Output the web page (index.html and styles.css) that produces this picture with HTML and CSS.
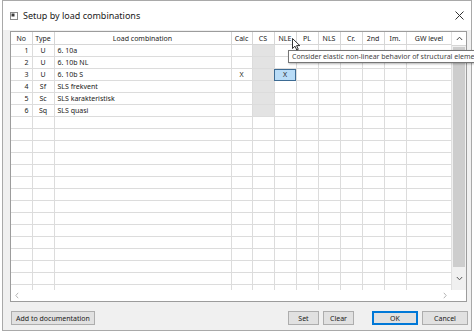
FILE: index.html
```html
<!DOCTYPE html>
<html lang="en">
<head>
    <meta charset="UTF-8">
    <title>Setup by load combinations</title>
    <link rel="stylesheet" href="styles.css">
</head>
<body>
    <div class="dialog">
        <div class="titlebar">
            <svg class="app-icon" width="8" height="8" viewBox="0 0 8 8">
                <rect x="0.5" y="0.5" width="7" height="7" fill="#fff" stroke="#8a8a8a"/>
                <rect x="1.5" y="1.5" width="3" height="3" fill="#3a3a3a"/>
            </svg>
            <span class="title">Setup by load combinations</span>
            <svg class="close" width="9" height="9" viewBox="0 0 9 9">
                <path d="M0.5 0.5 L8.5 8.5 M8.5 0.5 L0.5 8.5" stroke="#333" stroke-width="1"/>
            </svg>
        </div>

        <div class="content">
            <div class="grid-wrap">
                <div class="grid-main">
                    <div class="grid-area">
                        <table class="grid">
                            <colgroup>
                                <col style="width:21px"><col style="width:22px"><col style="width:177px">
                                <col style="width:21px"><col style="width:22px"><col style="width:22px">
                                <col style="width:22px"><col style="width:22px"><col style="width:22px">
                                <col style="width:22px"><col style="width:22px"><col style="width:46px">
                            </colgroup>
                            <thead>
                                <tr>
                                    <th>No</th><th>Type</th><th>Load combination</th><th>Calc</th><th>CS</th>
                                    <th>NLE</th><th>PL</th><th>NLS</th><th>Cr.</th><th>2nd</th><th>Im.</th><th>GW level</th>
                                </tr>
                            </thead>
                            <tbody id="rows"></tbody>
                        </table>
                    </div>
                    <div class="vscroll">
                        <div class="vscroll-head">
                            <svg width="7" height="5" viewBox="0 0 7 5"><path d="M0.8 4 L3.5 1.2 L6.2 4" fill="none" stroke="#444" stroke-width="1"/></svg>
                        </div>
                        <div class="vscroll-track">
                            <div class="vscroll-thumb"></div>
                            <div class="vscroll-arrow">
                                <svg width="7" height="5" viewBox="0 0 7 5"><path d="M0.8 1 L3.5 3.8 L6.2 1" fill="none" stroke="#555" stroke-width="1"/></svg>
                            </div>
                        </div>
                    </div>
                </div>
                <div class="hscroll">
                    <svg width="4" height="7" viewBox="0 0 4 7"><path d="M3.2 0.8 L0.8 3.5 L3.2 6.2" fill="none" stroke="#b5b5b5" stroke-width="1"/></svg>
                    <svg width="4" height="7" viewBox="0 0 4 7"><path d="M0.8 0.8 L3.2 3.5 L0.8 6.2" fill="none" stroke="#b5b5b5" stroke-width="1"/></svg>
                </div>
            </div>

            <div class="buttons">
                <button class="btn btn-doc">Add to documentation</button>
                <div class="spacer"></div>
                <button class="btn btn-small">Set</button>
                <button class="btn btn-small">Clear</button>
                <button class="btn btn-wide btn-default">OK</button>
                <button class="btn btn-wide">Cancel</button>
            </div>
        </div>
    </div>

    <div class="tooltip">Consider elastic non-linear behavior of structural elements</div>
    <svg class="cursor" width="9" height="13" viewBox="0 0 9 13">
        <path d="M0.5 0.5 L0.5 10.5 L3 8.2 L4.8 12 L6.3 11.3 L4.6 7.6 L7.8 7.6 Z" fill="#fff" stroke="#000" stroke-width="0.8"/>
    </svg>

    <script>
    document.addEventListener("DOMContentLoaded", function() {
        const data = [
            ["1", "U", "6. 10a", "", false],
            ["2", "U", "6. 10b NL", "", false],
            ["3", "U", "6. 10b S", "X", true],
            ["4", "Sf", "SLS frekvent", "", false],
            ["5", "Sc", "SLS karakteristisk", "", false],
            ["6", "Sq", "SLS quasi", "", false]
        ];
        const body = document.getElementById("rows");
        let html = "";
        for (let i = 0; i < 21; i++) {
            const r = data[i];
            if (r) {
                html += '<tr><td class="num">' + r[0] + '</td><td class="center">' + r[1] + '</td><td>' + r[2] + '</td>'
                    + '<td class="center">' + r[3] + '</td><td class="cs"></td>'
                    + (r[4] ? '<td class="center selected">X</td>' : '<td></td>')
                    + '<td></td><td></td><td></td><td></td><td></td><td></td></tr>';
            } else {
                html += '<tr>' + '<td></td>'.repeat(12) + '</tr>';
            }
        }
        body.innerHTML = html;
    });
    </script>
</body>
</html>
```

FILE: styles.css
```css
body {
    position: relative;
    margin: 0;
    background-color: #fff;
    font-family: "Noto Sans", "Open Sans", sans-serif;
    color: #1a1a1a;
    overflow: hidden;
}

.dialog {
    width: 468px;
    height: 329px;
    margin-left: 2px;
    border: 1px solid #a9a9a9;
    background-color: #f0f0f0;
    display: flex;
    flex-direction: column;
    overflow: hidden;
}

.titlebar {
    height: 29px;
    background-color: #fff;
    display: flex;
    align-items: center;
    padding: 0 6px 0 7px;
    flex-shrink: 0;
}

.app-icon {
    margin-right: 5px;
}

.title {
    font-size: 9px;
    flex: 1;
}

.close {
    margin-right: 1px;
}

.content {
    padding: 1px 3px 0 7px;
    display: flex;
    flex-direction: column;
}

.grid-wrap {
    width: 455px;
    height: 269px;
    border: 1px solid #9c9c9c;
    background-color: #fff;
    display: flex;
    flex-direction: column;
}

.grid-main {
    flex: 1;
    display: flex;
    overflow: hidden;
}

.grid-area {
    width: 441px;
    overflow: hidden;
}

.grid {
    table-layout: fixed;
    border-collapse: collapse;
    width: 441px;
    font-size: 7px;
}

.grid th {
    height: 12px;
    font-weight: normal;
    border-right: 1px solid #d6d6d6;
    border-bottom: 1px solid #d6d6d6;
    padding: 0;
    text-align: center;
    white-space: nowrap;
}

.grid td {
    height: 11px;
    padding: 0 3px;
    border-right: 1px solid #dcdcdc;
    border-bottom: 1px solid #dcdcdc;
    white-space: nowrap;
    overflow: hidden;
}

.grid td.num {
    text-align: right;
}

.grid td.center {
    text-align: center;
}

.grid td.cs {
    background-color: #e3e3e3;
}

.grid td.selected {
    background-color: #b9dcf7;
    outline: 1px solid #3d6b93;
    outline-offset: -1px;
}

.vscroll {
    width: 14px;
    display: flex;
    flex-direction: column;
    border-left: 1px solid #e0e0e0;
}

.vscroll-head {
    height: 13px;
    display: flex;
    align-items: center;
    justify-content: center;
    border-bottom: 1px solid #d6d6d6;
    flex-shrink: 0;
}

.vscroll-track {
    flex: 1;
    background-color: #f0f0f0;
    display: flex;
    flex-direction: column;
    padding-top: 1px;
}

.vscroll-thumb {
    height: 220px;
    margin: 0 1px;
    background-color: #cdcdcd;
    flex-shrink: 0;
}

.vscroll-arrow {
    flex: 1;
    display: flex;
    align-items: center;
    justify-content: center;
}

.hscroll {
    height: 11px;
    display: flex;
    justify-content: space-between;
    align-items: center;
    padding: 0 19px 0 4px;
    background-color: #fff;
}

.buttons {
    display: flex;
    align-items: center;
    margin-top: 9px;
    padding-left: 1px;
}

.spacer {
    flex: 1;
}

.btn {
    height: 14px;
    padding: 0;
    font-family: inherit;
    font-size: 7px;
    color: #1a1a1a;
    background-color: #e1e1e1;
    border: 1px solid #adadad;
    line-height: 11px;
}

.btn-doc {
    width: 84px;
}

.btn-small {
    width: 31px;
    margin-left: 4px;
}

.btn-wide {
    width: 46px;
    margin-left: 4px;
}

.btn-default {
    margin-left: 18px;
    border: 1px solid #0078d7;
    box-shadow: inset 0 0 0 1px #0078d7;
}

.tooltip {
    position: absolute;
    left: 288px;
    right: -4px;
    top: 50px;
    height: 11px;
    padding: 0 3px;
    background-color: #fff;
    border: 1px solid #767676;
    box-shadow: 1px 1px 2px rgba(0, 0, 0, 0.3);
    font-size: 7px;
    line-height: 11px;
    white-space: nowrap;
    overflow: hidden;
    color: #444;
}

.cursor {
    position: absolute;
    left: 292px;
    top: 38px;
}
```
